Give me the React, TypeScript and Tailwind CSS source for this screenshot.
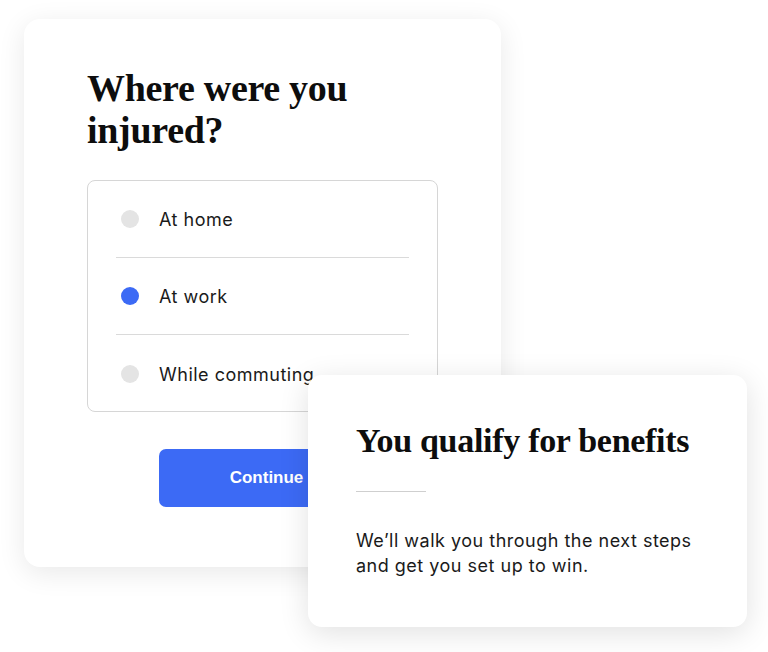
import React from "react";

const serif = { fontFamily: '"Liberation Serif", "DejaVu Serif", serif' };

function Option({ label, selected, last }: { label: string; selected?: boolean; last?: boolean }) {
  return (
    <div
      className={`flex h-[77px] items-center ${last ? "" : "border-b border-[#dadada]"}`}
    >
      <span
        className={`ml-[5px] h-[18px] w-[18px] rounded-full ${selected ? "bg-[#3c6af5]" : "bg-[#e4e4e4]"}`}
      />
      <span className="ml-[20px] pt-[2px] text-[18px] leading-none tracking-[0.5px] text-[#1a1a1a] [font-family:Inter,'Liberation_Sans',sans-serif]">
        {label}
      </span>
    </div>
  );
}

export default function App() {
  return (
    <div className="relative h-[652px] w-[768px] overflow-hidden bg-white">
      <div className="ml-[24px] mt-[19px] flex h-[548px] w-[477px] flex-col rounded-[16px] bg-white pl-[63px] pt-[48px] shadow-[0_6px_28px_rgba(0,0,0,0.09)]">
        <h1
          className="text-[38px] font-bold leading-[42px] tracking-[-0.3px] text-[#0d0d0d]"
          style={serif}
        >
          Where were you
          <br />
          injured?
        </h1>
        <div className="mt-[29px] h-[232px] w-[351px] rounded-[8px] border border-[#d6d6d6] px-[28px]">
          <Option label="At home" />
          <Option label="At work" selected />
          <Option label="While commuting" last />
        </div>
        <button className="ml-[72px] mt-[37px] h-[58px] w-[215px] rounded-[7px] bg-[#3c6af5] text-[17px] font-bold text-white [font-family:'Liberation_Sans',Arial,sans-serif]">
          Continue
        </button>
      </div>

      <div className="absolute left-[308px] top-[375px] h-[252px] w-[439px] rounded-[14px] bg-white pl-[48px] pt-[46px] shadow-[0_6px_30px_rgba(0,0,0,0.12)]">
        <h2
          className="text-[34px] font-bold leading-[40px] tracking-[-0.3px] text-[#0d0d0d]"
          style={serif}
        >
          You qualify for benefits
        </h2>
        <div className="mt-[30px] h-px w-[70px] bg-[#cfcfcf]" />
        <p className="mt-[36px] text-[18px] leading-[25px] tracking-[0.5px] text-[#1a1a1a] [font-family:Inter,'Liberation_Sans',sans-serif]">
          We’ll walk you through the next steps
          <br />
          and get you set up to win.
        </p>
      </div>
    </div>
  );
}
